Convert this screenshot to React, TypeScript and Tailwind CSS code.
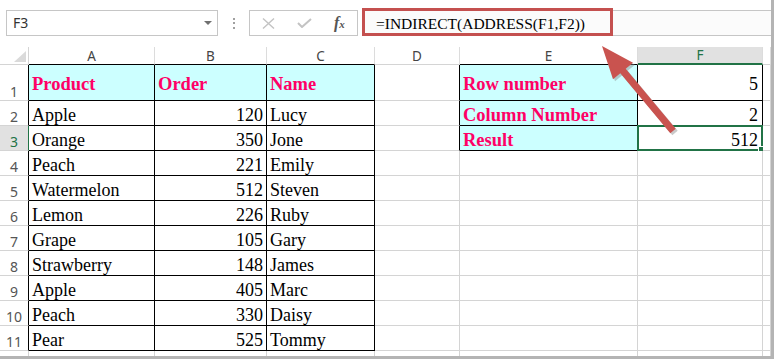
import React from "react";

const data: string[][] = [
  ["Product", "Order", "Name", "", "Row number", "5"],
  ["Apple", "120", "Lucy", "", "Column Number", "2"],
  ["Orange", "350", "Jone", "", "Result", "512"],
  ["Peach", "221", "Emily", "", "", ""],
  ["Watermelon", "512", "Steven", "", "", ""],
  ["Lemon", "226", "Ruby", "", "", ""],
  ["Grape", "105", "Gary", "", "", ""],
  ["Strawberry", "148", "James", "", "", ""],
  ["Apple", "405", "Marc", "", "", ""],
  ["Peach", "330", "Daisy", "", "", ""],
  ["Pear", "525", "Tommy", "", "", ""],
];

const GRAY_R = "border-r border-r-[#d4d4d4]";
const BLACK_R = "border-r border-r-black";
const GREEN_R = "border-r border-r-[#217346]";
const GRAY_B = "border-b border-b-[#d4d4d4]";
const BLACK_B = "border-b border-b-black";

function rightCls(r: number, c: number): string {
  if (c === 0) {
    if (r === 3) return GREEN_R;
    return r >= 1 && r <= 11 ? BLACK_R : GRAY_R;
  }
  if (c >= 1 && c <= 3) return r <= 11 ? BLACK_R : GRAY_R;
  if (c >= 4 && c <= 6) return r <= 3 ? BLACK_R : GRAY_R;
  return GRAY_R;
}

function bottomCls(r: number, c: number): string {
  if (r === 12) return "";
  if (c >= 1 && c <= 3) return r <= 11 ? BLACK_B : GRAY_B;
  if (c >= 5 && c <= 6) return r <= 3 ? BLACK_B : GRAY_B;
  return GRAY_B;
}

const letters = ["", "A", "B", "C", "D", "E", "F", ""];

function HeaderRow() {
  return (
    <>
      <div className="relative border-r border-r-[#d4d4d4] border-b border-b-[#d4d4d4]">
        <svg className="absolute left-[14px] top-[4px]" width="13" height="12" viewBox="0 0 13 12">
          <polygon points="12,0 12,11 0,11" fill="#dadada" />
        </svg>
      </div>
      {letters.slice(1).map((l, i) => {
        const c = i + 1;
        let cls = "flex items-end justify-center text-[13.5px] leading-[14px] text-[#444] border-r border-r-[#dcdcdc] ";
        if (c >= 1 && c <= 3) cls += "border-b border-b-black";
        else if (c === 5) cls += "border-b border-b-black";
        else if (c === 6) cls += "border-b-2 border-b-[#217346] bg-[#e1e1e1] text-[#217346]";
        else cls += "border-b border-b-[#d4d4d4]";
        return (
          <div key={c} className={cls}>
            <span className="pb-[1px]">{l}</span>
          </div>
        );
      })}
    </>
  );
}

function DataRow({ r }: { r: number }) {
  const row = r <= 11 ? data[r - 1] : ["", "", "", "", "", ""];
  const cells: React.ReactNode[] = [];
  const hdrBg = r === 3 ? "bg-[#e1e1e1] text-[#217346]" : "text-[#555]";
  cells.push(
    <div
      key="h"
      className={`flex items-end justify-center text-[14px] leading-[16px] ${hdrBg} ${rightCls(r, 0)} ${bottomCls(r, 0)}`}
    >
      {r <= 11 ? r : ""}
    </div>
  );
  for (let c = 1; c <= 7; c++) {
    const v = c <= 6 ? row[c - 1] : "";
    const isHead = (r === 1 && c >= 1 && c <= 3) || (r <= 3 && c === 5);
    const bg = isHead ? "bg-[#ccffff]" : "";
    const isNum = c === 2 || c === 6;
    const align = r === 1 ? "items-center pt-[3px]" : "items-end";
    const just = isNum && !isHead ? "justify-end pr-[3px]" : "justify-start pl-[3px]";
    const text = isHead
      ? "font-bold text-[#ff0066] text-[18.5px]"
      : "text-black text-[18px]";
    cells.push(
      <div
        key={c}
        className={`relative flex ${align} ${just} font-['Liberation_Serif',serif] leading-[20px] whitespace-nowrap overflow-visible ${bg} ${text} ${rightCls(r, c)} ${bottomCls(r, c)} ${c === 6 ? "pr-[4px]" : ""}`}
      >
        <span>{v}</span>
        {r === 3 && c === 6 && (
          <div className="absolute -left-[1px] -top-[1px] -right-[1px] -bottom-[1px] border-2 border-[#217346]">
            <div className="absolute -right-[3px] -bottom-[3px] w-[6px] h-[6px] bg-[#217346] border border-white" />
          </div>
        )}
      </div>
    );
  }
  return <>{cells}</>;
}

export default function App() {
  return (
    <div className="relative w-[774px] h-[359px] overflow-hidden bg-white border-r-[3px] border-r-[#b4b4b4] border-b-[3px] border-b-[#b4b4b4] font-['Noto_Sans',sans-serif]">
      {/* formula bar */}
      <div className="h-[47px] pt-[10px] flex items-start">
        <div className="ml-[6px] w-[212px] h-[26px] border border-[#c6c6c6] flex items-center justify-between pl-[6px] pr-[5px]">
          <span className="text-[14px] text-[#333] leading-none">F3</span>
          <svg width="8" height="4" viewBox="0 0 8 4">
            <polygon points="0,0 8,0 4,4" fill="#707070" />
          </svg>
        </div>
        <div className="w-[31px] h-[26px] flex flex-col items-center justify-center gap-[2.5px]">
          <div className="w-[2px] h-[2px] bg-[#a0a0a0]" />
          <div className="w-[2px] h-[2px] bg-[#a0a0a0]" />
          <div className="w-[2px] h-[2px] bg-[#a0a0a0]" />
        </div>
        <div className="w-[109px] h-[26px] border border-[#c6c6c6] flex items-center">
          <svg className="ml-[12px]" width="13" height="11" viewBox="0 0 13 11">
            <path d="M1 0.5 L12 10.5 M12 0.5 L1 10.5" stroke="#c3c3c3" strokeWidth="1.4" fill="none" />
          </svg>
          <svg className="ml-[22px]" width="15" height="10" viewBox="0 0 15 10">
            <path d="M1 5 L5 9 L14 1" stroke="#c3c3c3" strokeWidth="2" fill="none" />
          </svg>
          <span className="ml-[22px] font-['Liberation_Serif',serif] italic text-[#555] leading-none flex items-baseline">
            <span className="text-[16px] font-bold">f</span>
            <span className="text-[11px] font-bold">x</span>
          </span>
        </div>
        <div className="ml-[4px] flex-1 h-[26px] border-t border-b border-l border-[#c6c6c6] bg-[#fbfbfb] flex items-center pl-[13px]">
          <span className="font-['Liberation_Serif',serif] text-[15.5px] text-black leading-[18px] pt-[1px]">
            =INDIRECT(ADDRESS(F1,F2))
          </span>
        </div>
      </div>

      {/* grid */}
      <div className="grid grid-cols-[29px_126px_112px_108px_85px_178px_125px_8px] grid-rows-[18px_36px_repeat(10,25px)_6px]">
        <HeaderRow />
        {Array.from({ length: 12 }, (_, i) => (
          <DataRow key={i} r={i + 1} />
        ))}
      </div>

      {/* red annotation box */}
      <div className="absolute left-[362px] top-[8px] w-[251px] h-[28px] border-[3px] border-[#c4504f]" />

      {/* arrow */}
      <svg className="absolute left-0 top-0 pointer-events-none" width="774" height="359" viewBox="0 0 774 359">
        <polygon
          points="604,48 635,64.7 627.7,70.8 677.7,130.8 672.3,135.2 622.3,75.2 615,81.3"
          fill="#8a8a8a"
          opacity="0.45"
        />
        <polygon
          points="602,46 633,62.7 625.7,68.8 675.7,128.8 670.3,133.2 620.3,73.2 613,79.3"
          fill="#c9534f"
        />
      </svg>
    </div>
  );
}
